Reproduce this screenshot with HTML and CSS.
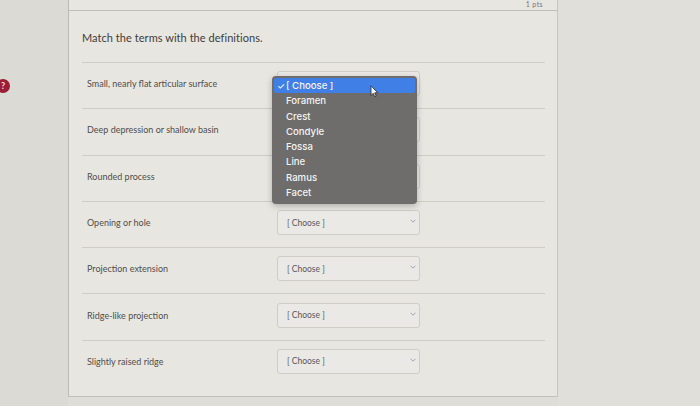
FILE: index.html
```html
<!DOCTYPE html>
<html>
<head>
<meta charset="utf-8">
<link rel="stylesheet" href="styles.css">
</head>
<body>
<div class="screen">
  <div class="gutter"><span class="badge">?</span></div>
  <div class="card">
    <div class="card-head"><span class="pts">1 pts</span></div>
    <div class="card-body">
      <p class="title">Match the terms with the definitions.</p>
      <div class="rows">
        <div class="row"><span class="label">Small, nearly flat articular surface</span><div class="select covered"><span>[ Choose ]</span><svg class="chev" viewBox="0 0 6 4"><path d="M0.5 0.7 L3 3.2 L5.5 0.7"/></svg></div></div>
        <div class="row"><span class="label">Deep depression or shallow basin</span><div class="select covered"><span>[ Choose ]</span><svg class="chev" viewBox="0 0 6 4"><path d="M0.5 0.7 L3 3.2 L5.5 0.7"/></svg></div></div>
        <div class="row"><span class="label">Rounded process</span><div class="select covered"><span>[ Choose ]</span><svg class="chev" viewBox="0 0 6 4"><path d="M0.5 0.7 L3 3.2 L5.5 0.7"/></svg></div></div>
        <div class="row"><span class="label">Opening or hole</span><div class="select"><span>[ Choose ]</span><svg class="chev" viewBox="0 0 6 4"><path d="M0.5 0.7 L3 3.2 L5.5 0.7"/></svg></div></div>
        <div class="row"><span class="label">Projection extension</span><div class="select"><span>[ Choose ]</span><svg class="chev" viewBox="0 0 6 4"><path d="M0.5 0.7 L3 3.2 L5.5 0.7"/></svg></div></div>
        <div class="row"><span class="label">Ridge-like projection</span><div class="select"><span>[ Choose ]</span><svg class="chev" viewBox="0 0 6 4"><path d="M0.5 0.7 L3 3.2 L5.5 0.7"/></svg></div></div>
        <div class="row"><span class="label">Slightly raised ridge</span><div class="select"><span>[ Choose ]</span><svg class="chev" viewBox="0 0 6 4"><path d="M0.5 0.7 L3 3.2 L5.5 0.7"/></svg></div></div>
      </div>
    </div>
    <ul class="menu">
      <li class="item selected"><span class="check">✓</span>[ Choose ]</li>
      <li class="item">Foramen</li>
      <li class="item">Crest</li>
      <li class="item">Condyle</li>
      <li class="item">Fossa</li>
      <li class="item">Line</li>
      <li class="item">Ramus</li>
      <li class="item">Facet</li>
    </ul>
    <svg class="cursor" viewBox="0 0 10 15"><path d="M1 1 L1 12 L3.6 9.6 L5.4 13.6 L7 12.9 L5.3 9 L8.8 9 Z"/></svg>
  </div>
  <div class="rightside"></div>
</div>
</body>
</html>
```

FILE: styles.css
```css
* { box-sizing: border-box; }
html, body { margin: 0; padding: 0; }
body {
  width: 700px;
  height: 406px;
  overflow: hidden;
  background: #dfddd8;
  font-family: Lato, "Open Sans", sans-serif;
}
.screen {
  display: flex;
  width: 700px;
  height: 406px;
}
.gutter {
  width: 68px;
  flex: none;
  background: #dcdad5;
  position: relative;
}
.badge {
  position: absolute;
  left: -4px;
  top: 79px;
  width: 14px;
  height: 14px;
  border-radius: 50%;
  background: #9b1d36;
  color: #f3dfe2;
  font-size: 9px;
  font-weight: bold;
  line-height: 14px;
  text-align: center;
}
.card {
  width: 490px;
  flex: none;
  height: 397px;
  position: relative;
  background: #e8e6e1;
  border-left: 1px solid #bdbab4;
  border-right: 1px solid #c9c6c0;
  border-bottom: 1px solid #c4c1bb;
}
.card-head {
  height: 11px;
  border-bottom: 1px solid #c2bfb9;
  display: flex;
  justify-content: flex-end;
  align-items: flex-start;
  padding-right: 14px;
}
.pts {
  font-size: 7px;
  line-height: 8px;
  color: #77746f;
  letter-spacing: 0.4px;
}
.card-body {
  padding: 20px 12px 0 13px;
}
.title {
  margin: 0 0 17px 0;
  font-size: 11px;
  line-height: 14px;
  color: #3d3c3a;
  letter-spacing: 0.05px;
}
.rows {
  display: flex;
  flex-direction: column;
}
.row {
  display: flex;
  align-items: center;
  height: 46.3px;
  padding: 8px 0 12px 0;
  border-top: 1px solid #cfccc6;
}
.label {
  width: 195px;
  flex: none;
  padding-left: 5px;
  font-size: 9px;
  color: #4f4e4b;
}
.select {
  width: 143px;
  height: 25px;
  flex: none;
  display: flex;
  align-items: center;
  justify-content: space-between;
  padding: 0 3px 0 9px;
  background: #ebe9e5;
  border: 1px solid #d0cdc7;
  border-radius: 3px;
  font-size: 8.5px;
  color: #58575a;
}
.select.covered span {
  visibility: hidden;
}
.chev {
  width: 6px;
  height: 4px;
  margin-top: -3px;
}
.chev path {
  fill: none;
  stroke: #9d9ba8;
  stroke-width: 0.9;
}
.menu {
  position: absolute;
  left: 203px;
  top: 76px;
  width: 145px;
  height: 128px;
  margin: 0;
  padding: 2px;
  list-style: none;
  background: #6e6d6b;
  border-radius: 4px;
  box-shadow: 0 2px 6px rgba(0,0,0,0.25);
}
.item {
  height: 15.3px;
  line-height: 15.3px;
  padding-left: 12px;
  font-family: Inter, "Open Sans", sans-serif;
  font-size: 9.6px;
  font-weight: 500;
  color: #f4f4f4;
  position: relative;
}
.item.selected {
  background: #3f7fe6;
  border-radius: 2px;
}
.check {
  position: absolute;
  left: 3px;
  top: 0;
  font-size: 9px;
}
.cursor {
  position: absolute;
  left: 301px;
  top: 85px;
  width: 9px;
  height: 13px;
}
.cursor path {
  fill: #ffffff;
  stroke: #222222;
  stroke-width: 0.9;
}
.rightside {
  flex: 1;
  background: #e1dfda;
}
```
